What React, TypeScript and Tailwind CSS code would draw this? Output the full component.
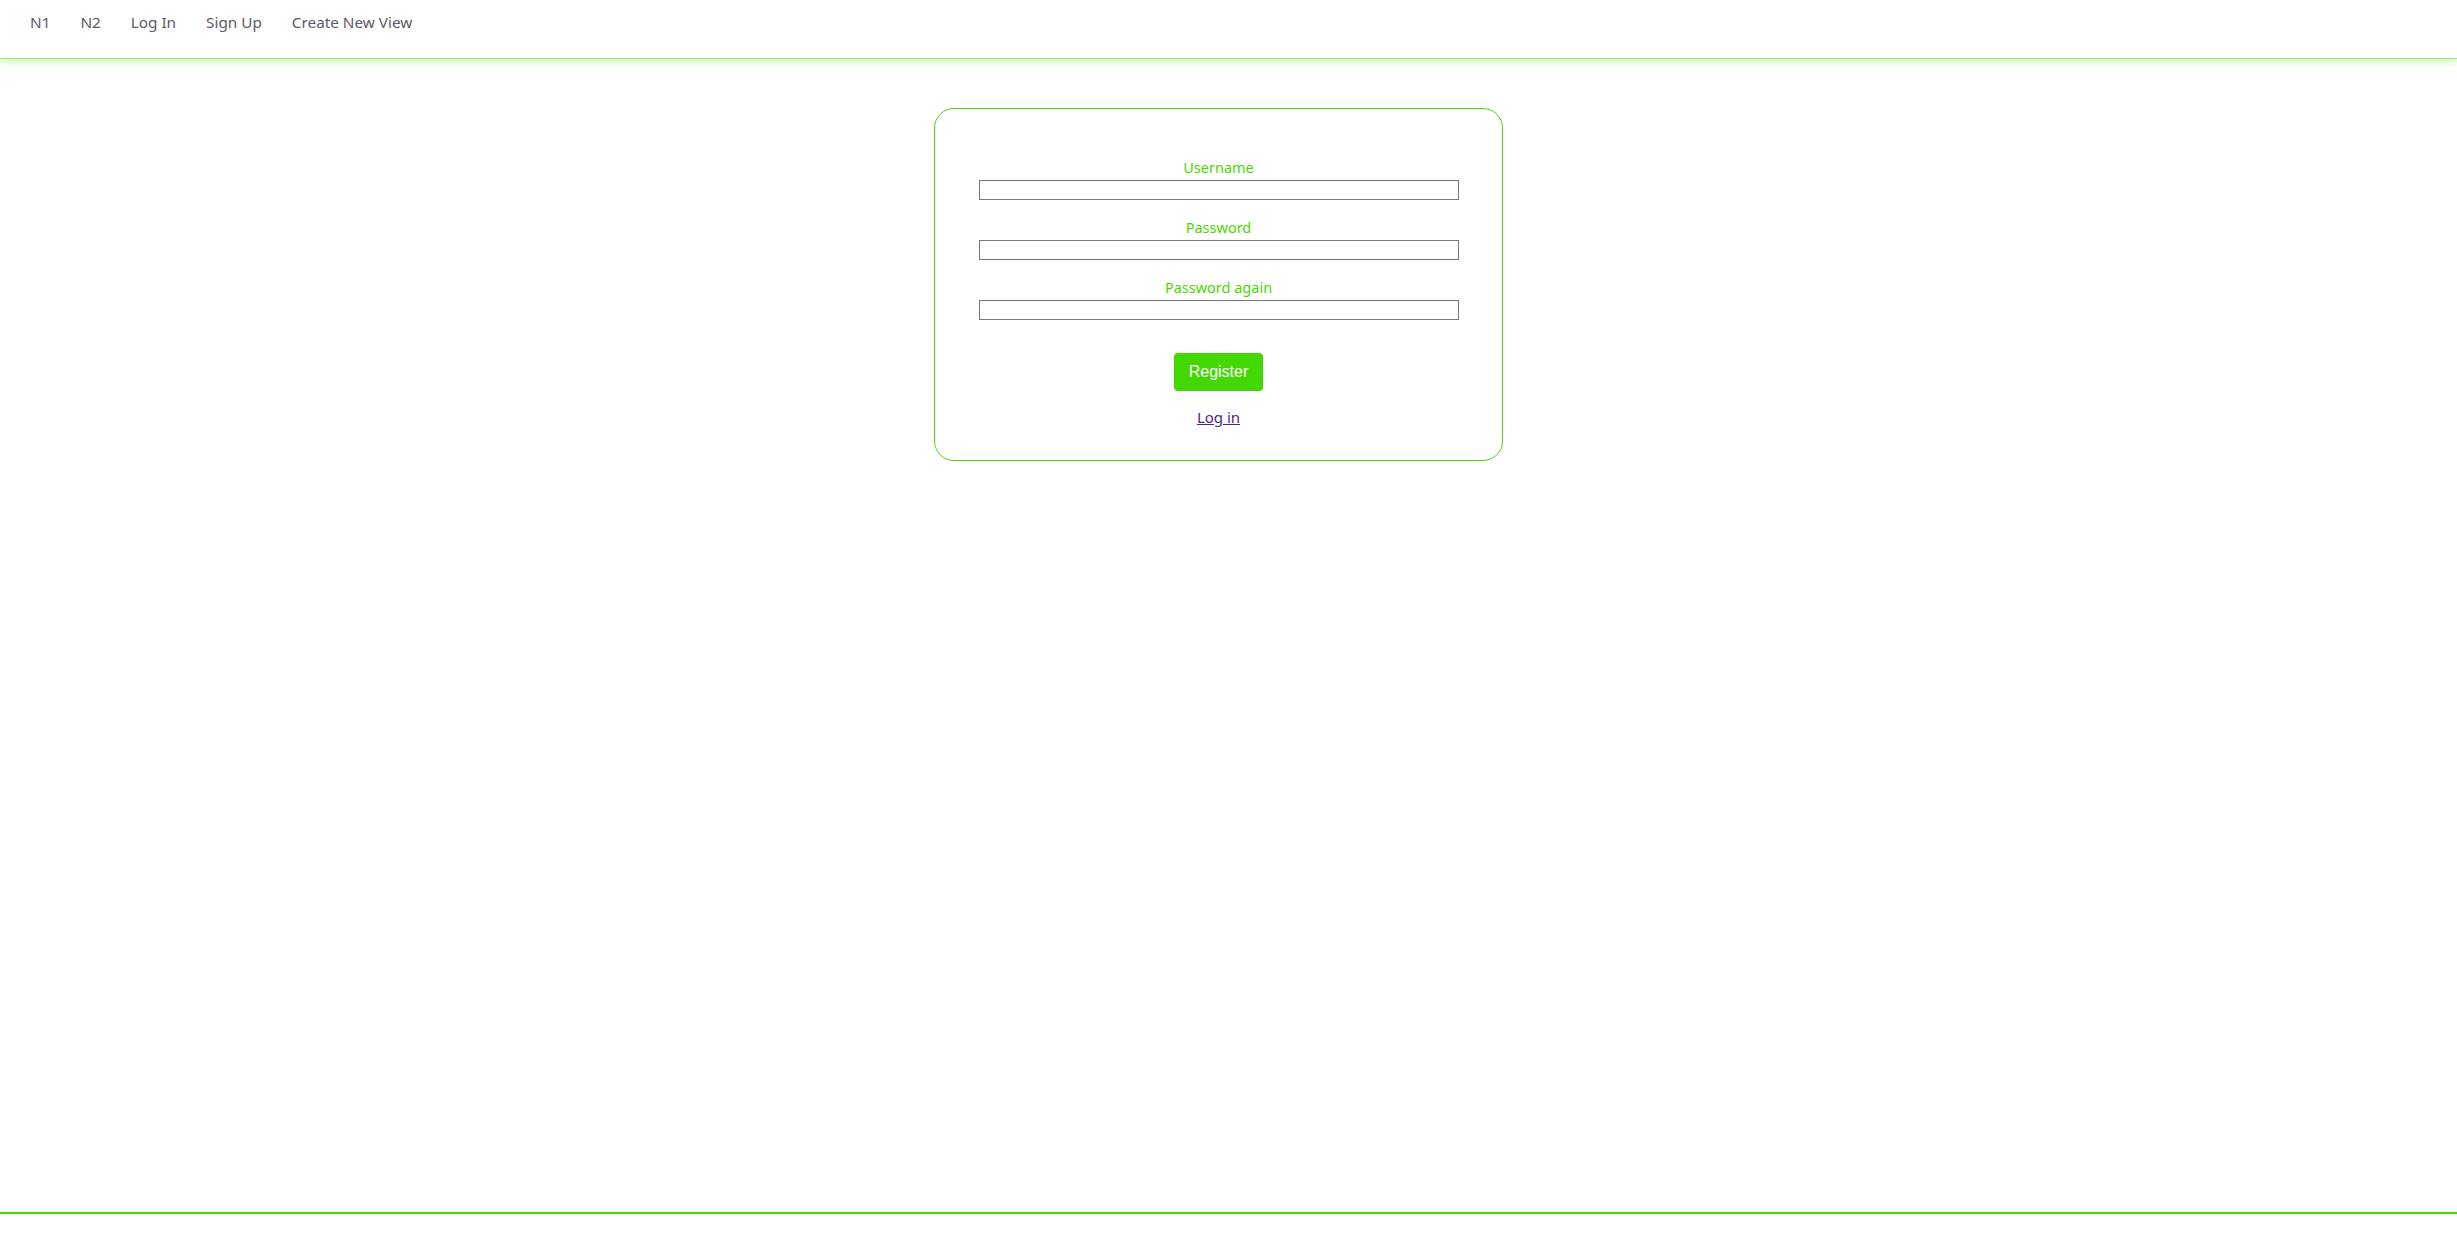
import { useState } from 'react';

const links = ['N1', 'N2', 'Log In', 'Sign Up', 'Create New View'];

function Field({ label, type }: { label: string; type: string }) {
  return (
    <div className="flex flex-col items-center gap-[3px]">
      <label className="text-[14.5px] leading-[20px] text-[#4cd800]">{label}</label>
      <input
        type={type}
        className="w-[480px] h-[20px] border border-[#767676] bg-white outline-none px-1 text-[13px]"
      />
    </div>
  );
}

export default function App() {
  const [user, setUser] = useState('');

  return (
    <div
      className="min-h-screen flex flex-col bg-white"
      style={{ fontFamily: '"Noto Sans", "Open Sans", sans-serif' }}
    >
      {/* NAVBAR */}
      <nav className="h-[59px] flex items-start pt-[10px] pl-[15px] border-b border-[#98e872] shadow-[0_3px_8px_-1px_rgba(110,225,60,0.45)]">
        {links.map((l) => (
          <a
            key={l}
            href="#"
            className="px-[15px] text-[15.3px] leading-[24px] text-[#5d5a66] no-underline"
          >
            {l}
          </a>
        ))}
      </nav>

      {/* FORM */}
      <main className="flex-1 pt-[49px]">
        <div className="ml-[934px] w-[569px] border border-[#4ad60c] rounded-[20px] pt-[48px] pb-[32px] px-[43px]">
          <form className="flex flex-col items-center" onSubmit={(e) => e.preventDefault()}>
            <div className="flex flex-col gap-[17px]">
              <Field label="Username" type="text" />
              <Field label="Password" type="password" />
              <Field label="Password again" type="password" />
            </div>
            <button
              type="submit"
              onClick={() => setUser(user)}
              className="mt-[33px] w-[89px] h-[38px] rounded-[4px] bg-[#43d900] text-white text-[16px]"
              style={{ fontFamily: '"Liberation Sans", Arial, sans-serif' }}
            >
              Register
            </button>
            <a href="#" className="mt-[15px] text-[15px] leading-[22px] text-[#4b2a86] underline">
              Log in
            </a>
          </form>
        </div>
      </main>

      {/* FOOTER */}
      <footer className="h-[38px] border-t-2 border-[#44d800]" />
    </div>
  );
}
